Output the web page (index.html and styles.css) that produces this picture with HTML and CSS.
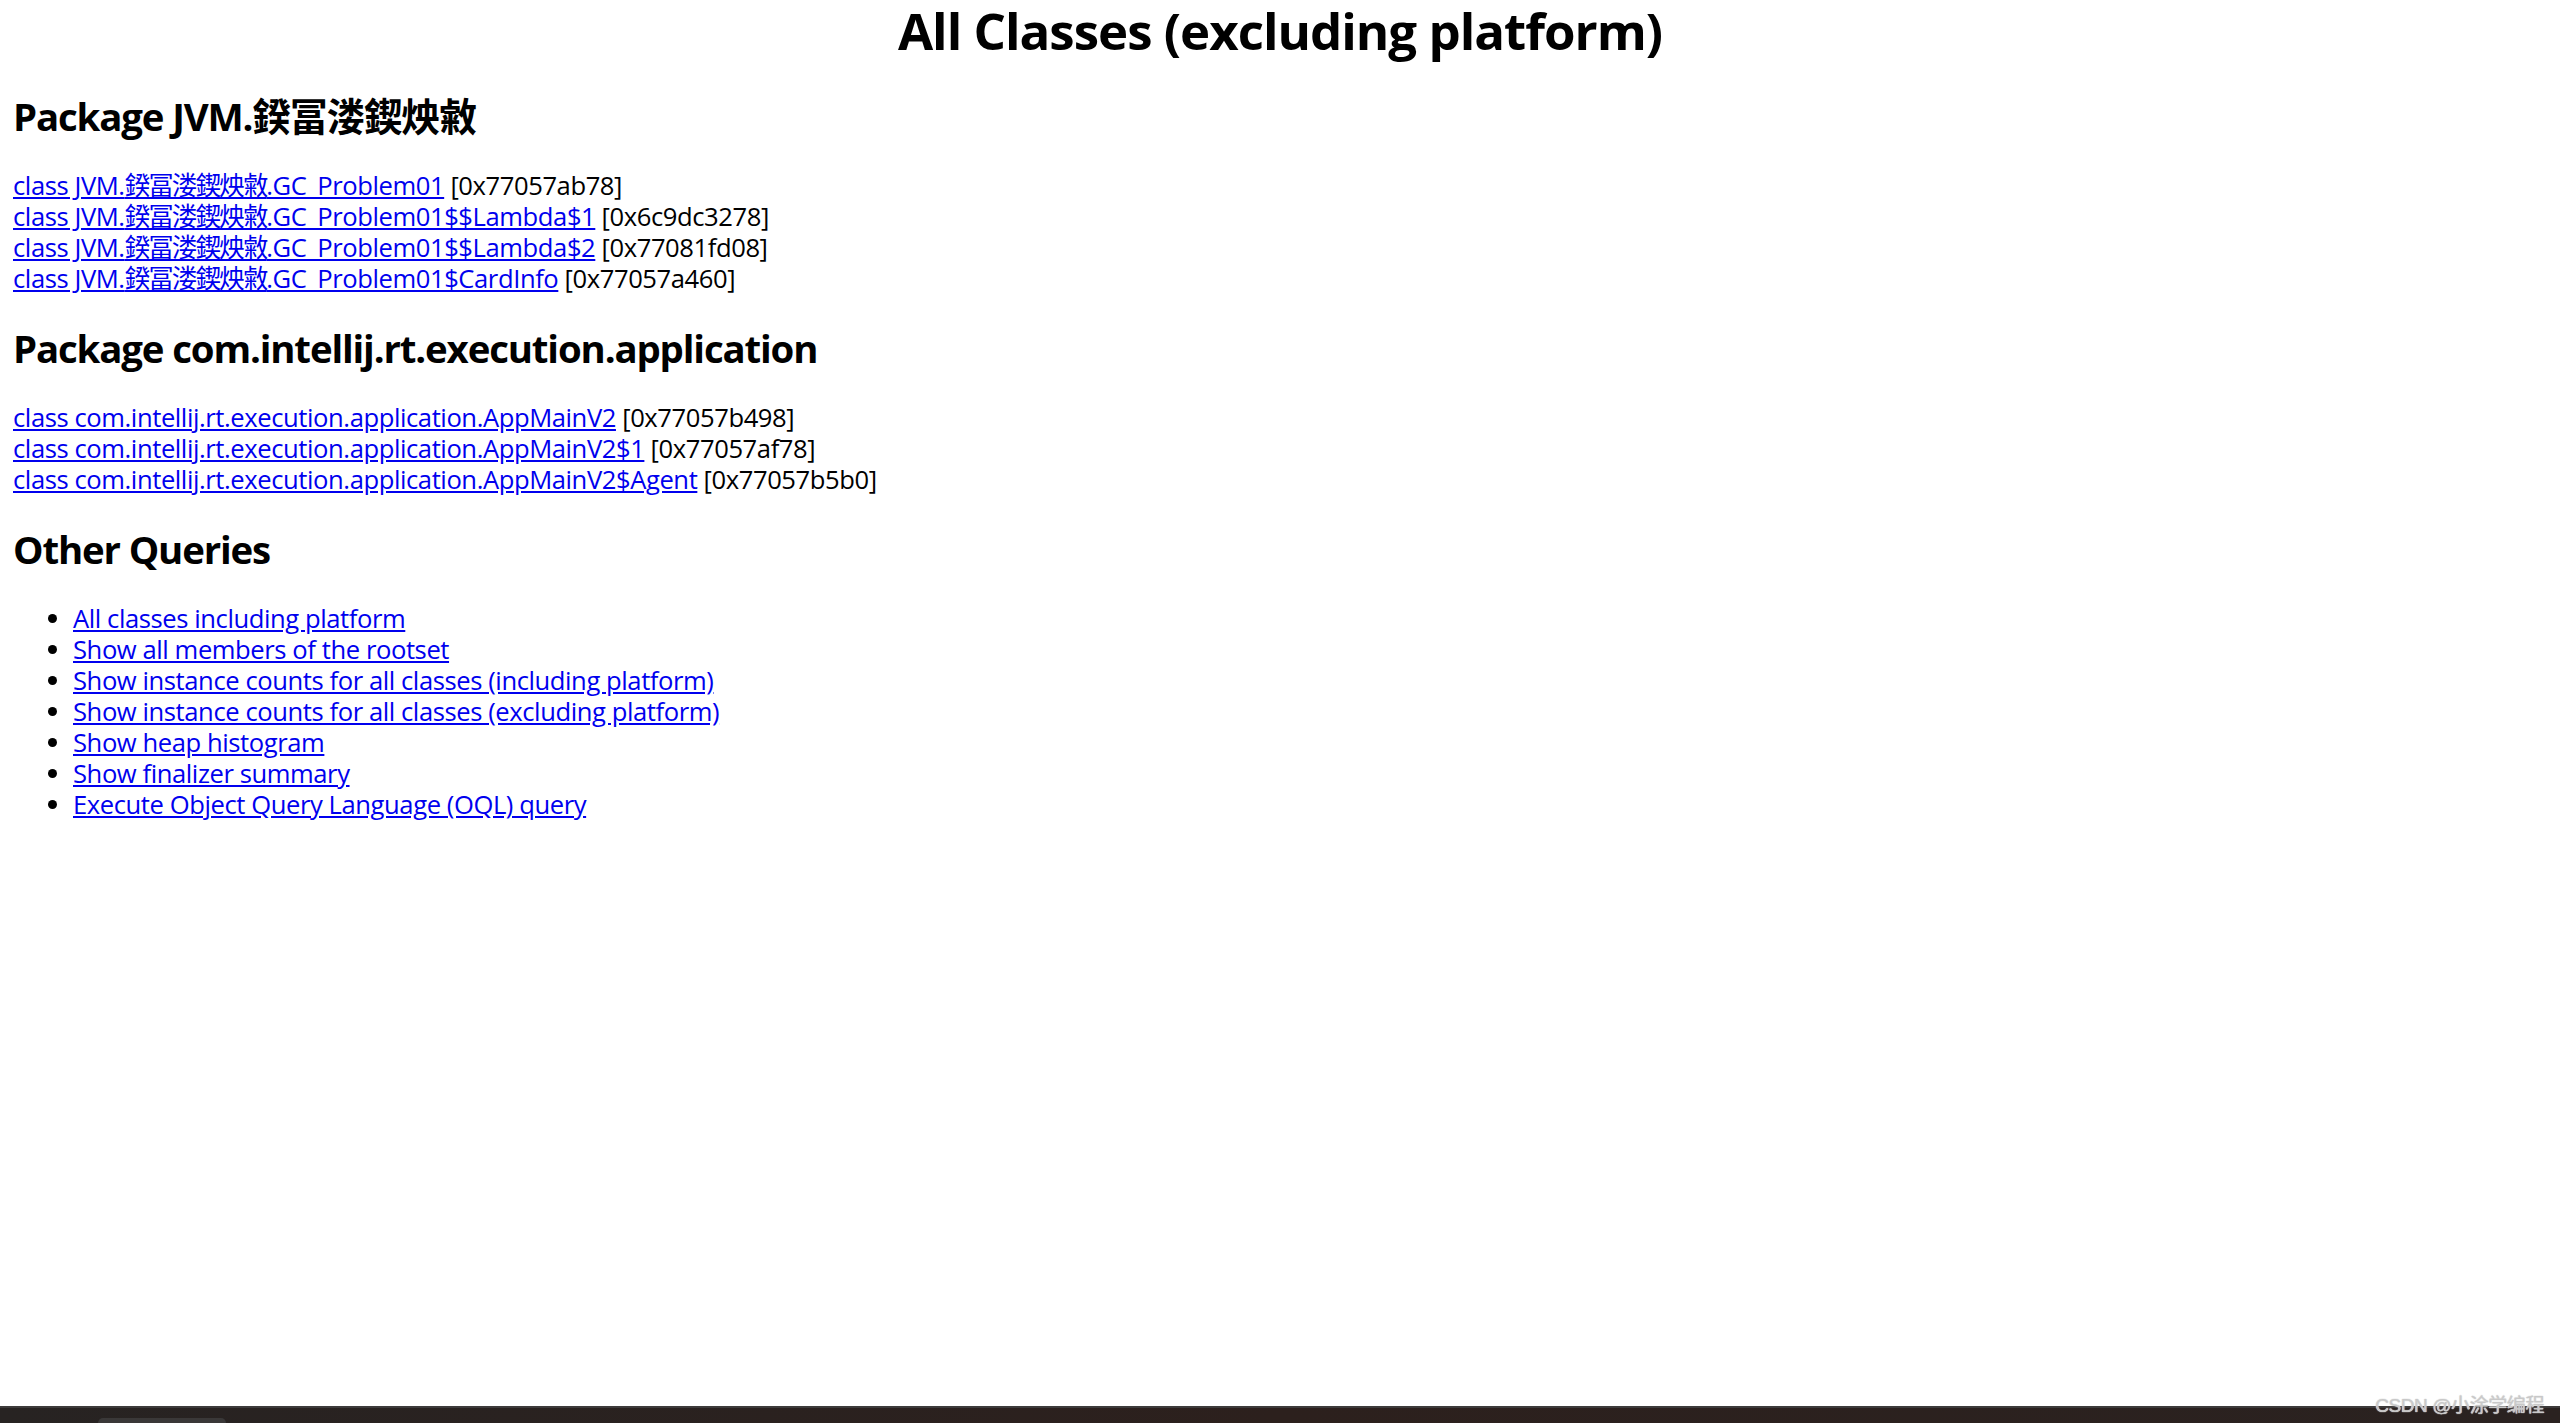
FILE: index.html
```html
<!DOCTYPE html>
<html>
<head>
<meta charset="utf-8">
<title>All Classes (excluding platform)</title>
<link rel="stylesheet" href="styles.css">
</head>
<body>
<main class="page">
<h1 class="title">All Classes (excluding platform)</h1>

<h2 class="pkg pkg-first">Package JVM.鍨冨溇鍥炴敹</h2>
<div class="rows">
<a href="#">class JVM.<span class="cjk">鍨冨溇鍥炴敹</span>.GC_Problem01</a> [0x77057ab78]<br>
<a href="#">class JVM.<span class="cjk">鍨冨溇鍥炴敹</span>.GC_Problem01$$Lambda$1</a> [0x6c9dc3278]<br>
<a href="#">class JVM.<span class="cjk">鍨冨溇鍥炴敹</span>.GC_Problem01$$Lambda$2</a> [0x77081fd08]<br>
<a href="#">class JVM.<span class="cjk">鍨冨溇鍥炴敹</span>.GC_Problem01$CardInfo</a> [0x77057a460]<br>
</div>

<h2 class="pkg">Package com.intellij.rt.execution.application</h2>
<div class="rows">
<a href="#">class com.intellij.rt.execution.application.AppMainV2</a> [0x77057b498]<br>
<a href="#">class com.intellij.rt.execution.application.AppMainV2$1</a> [0x77057af78]<br>
<a href="#">class com.intellij.rt.execution.application.AppMainV2$Agent</a> [0x77057b5b0]<br>
</div>

<h2 class="pkg">Other Queries</h2>
<ul class="queries">
<li><a href="#">All classes including platform</a></li>
<li><a href="#">Show all members of the rootset</a></li>
<li><a href="#">Show instance counts for all classes (including platform)</a></li>
<li><a href="#">Show instance counts for all classes (excluding platform)</a></li>
<li><a href="#">Show heap histogram</a></li>
<li><a href="#">Show finalizer summary</a></li>
<li><a href="#">Execute Object Query Language (OQL) query</a></li>
</ul>
</main>
<footer class="taskbar">
<div class="taskbar-tab"></div>
</footer>
<div class="watermark">CSDN @小涂学编程</div>
</body>
</html>
```

FILE: styles.css
```css
html, body {
  margin: 0;
  padding: 0;
  background: #ffffff;
}
body {
  min-height: 100vh;
  display: flex;
  flex-direction: column;
  font-family: "Open Sans", "Noto Sans CJK SC", sans-serif;
  font-size: 25.6px;
  letter-spacing: -0.42px;
  color: #000000;
}
.page {
  flex: 1;
  padding: 0 13px;
}
.title {
  margin: 0;
  text-align: center;
  font-size: 51px;
  line-height: 60px;
  font-weight: 700;
  letter-spacing: -1px;
}
.pkg {
  margin: 31px 0 31px 0;
  font-size: 38.4px;
  line-height: 46px;
  font-weight: 700;
  letter-spacing: -1.15px;
}
.pkg-first {
  margin-top: 33px;
}
.rows {
  line-height: 31px;
}
.cjk {
  letter-spacing: -2px;
}
a {
  color: #0000ee;
  text-decoration: underline;
}
.queries {
  margin: 0;
  padding-left: 60px;
  line-height: 31px;
}
.taskbar {
  height: 17px;
  box-sizing: border-box;
  border-top: 2px solid #3d3b3b;
  background: linear-gradient(90deg, #272322 0%, #2c201d 50%, #2a2220 100%);
  display: flex;
  align-items: flex-end;
}
.taskbar-tab {
  margin-left: 98px;
  width: 128px;
  height: 5px;
  background: #3a3838;
  border-radius: 6px 6px 0 0;
}
.watermark {
  position: absolute;
  right: 16px;
  bottom: 6px;
  font-family: "Liberation Sans", "Noto Sans CJK SC", sans-serif;
  font-size: 19px;
  color: #c8c8c8;
  text-shadow: 0 0 1px #ffffff, 0 0 1px #888888;
}
```
